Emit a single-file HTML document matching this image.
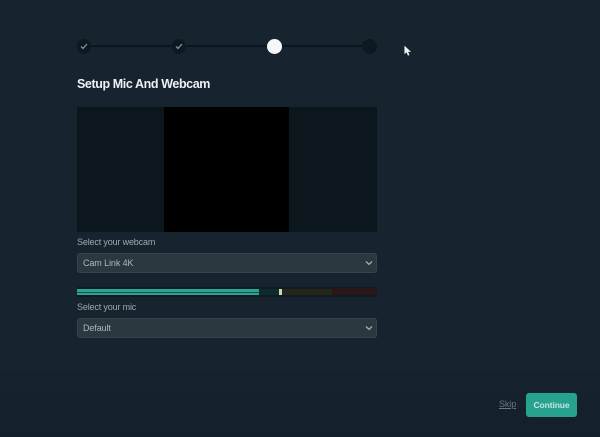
<!DOCTYPE html>
<html>
<head>
<meta charset="utf-8">
<style>
html,body{margin:0;padding:0}
body{width:600px;height:437px;overflow:hidden;background:#17232f;position:relative;font-family:"Liberation Sans",sans-serif}
.a{position:absolute}
.t{position:absolute;white-space:nowrap;line-height:14px;filter:blur(.25px)}
.dith{left:0;top:372px;width:600px;height:65px;background-image:repeating-conic-gradient(#0d1721 0 25%,transparent 0 50%);background-size:2px 2px;opacity:.5;-webkit-mask-image:linear-gradient(rgba(0,0,0,.35),#000);mask-image:linear-gradient(rgba(0,0,0,.35),#000)}
.sel{left:77px;width:300px;height:20px;box-sizing:border-box;background:#2b3840;border:1px solid #36434c;border-radius:3px}
.lab{font-size:9px;letter-spacing:-.16px;color:#9ea8ae}
.val{font-size:9px;letter-spacing:-.1px;color:#aeb7bc}
</style>
</head>
<body>
<div class="a dith"></div>

<div class="a" style="left:84px;top:45px;width:285px;height:2px;background:#0c161e"></div>
<div class="a" style="left:77px;top:39px;width:14px;height:15px;border-radius:50%;background:#0e1820"></div>
<div class="a" style="left:172px;top:39px;width:14px;height:15px;border-radius:50%;background:#0e1820"></div>
<div class="a" style="left:267px;top:39px;width:15px;height:15px;border-radius:50%;background:#f5f8fa"></div>
<div class="a" style="left:362px;top:39px;width:15px;height:15px;border-radius:50%;background:#0e1820"></div>
<svg class="a" style="left:77px;top:39px" width="14" height="14" viewBox="0 0 14 14"><path d="M4 7.4l2 2 4-4.4" fill="none" stroke="#87929a" stroke-width="1.3"/></svg>
<svg class="a" style="left:172px;top:39px" width="14" height="14" viewBox="0 0 14 14"><path d="M4 7.4l2 2 4-4.4" fill="none" stroke="#87929a" stroke-width="1.3"/></svg>
<svg class="a" style="left:404px;top:45px" width="9" height="12" viewBox="0 0 10 13"><path d="M0.5 0.5V10l2.3-2 1.6 3.6 1.7-.7-1.6-3.4H7.8z" fill="#eef2f4"/></svg>

<div class="t" style="left:77px;top:76px;font-size:12.5px;letter-spacing:-.4px;font-weight:bold;color:#eef1f3;line-height:16px">Setup Mic And Webcam</div>

<div class="a" style="left:77px;top:107px;width:300px;height:125px;background:#0b171c"></div>
<div class="a" style="left:164px;top:107px;width:125px;height:125px;background:#000"></div>

<div class="t lab" style="left:77px;top:235px">Select your webcam</div>
<div class="a sel" style="top:253px"></div>
<div class="t val" style="left:83px;top:256px">Cam Link 4K</div>
<svg class="a" style="left:365px;top:260px" width="8" height="6" viewBox="0 0 8 6"><path d="M1 1.5l3 2.8 3-2.8" fill="none" stroke="#a5aeb3" stroke-width="1.3"/></svg>

<div class="a" style="left:77px;top:287px;width:300px;height:10px;background:#0e1c22"></div>
<div class="a" style="left:77px;top:289px;width:182px;height:6px;background:#2aa594"></div>
<div class="a" style="left:77px;top:292px;width:182px;height:1px;background:#14504c"></div>
<div class="a" style="left:259px;top:289px;width:21px;height:6px;background:#0f2a2c"></div>
<div class="a" style="left:282px;top:289px;width:50px;height:6px;background:#25261a"></div>
<div class="a" style="left:332px;top:288px;width:45px;height:7px;background:#2a1518"></div>
<div class="a" style="left:279px;top:289px;width:3px;height:6px;background:#d8d2b4"></div>

<div class="t lab" style="left:77px;top:300px">Select your mic</div>
<div class="a sel" style="top:318px"></div>
<div class="t val" style="left:83px;top:321px">Default</div>
<svg class="a" style="left:365px;top:325px" width="8" height="6" viewBox="0 0 8 6"><path d="M1 1.5l3 2.8 3-2.8" fill="none" stroke="#a5aeb3" stroke-width="1.3"/></svg>

<div class="t" style="left:499px;top:397px;font-size:9px;letter-spacing:-.1px;color:#6d7881;text-decoration:underline">Skip</div>
<div class="a" style="left:526px;top:393px;width:51px;height:24px;background:#27a28f;border-radius:3px"></div>
<div class="t" style="left:526px;top:398px;width:51px;text-align:center;font-size:8.5px;letter-spacing:-.1px;font-weight:bold;color:#c2e6e0">Continue</div>
</body>
</html>
